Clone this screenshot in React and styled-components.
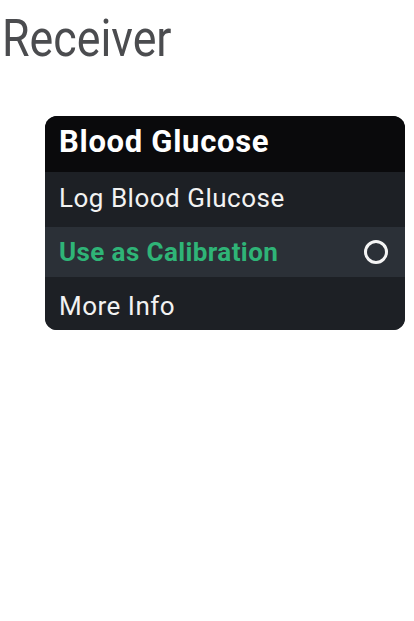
import React from "react";
import styled, { createGlobalStyle } from "styled-components";

const Global = createGlobalStyle`
  html, body { margin: 0; padding: 0; background: #ffffff; }
  body { font-family: Roboto, "Liberation Sans", sans-serif; }
`;

const Page = styled.div`
  width: 414px;
  height: 621px;
  display: flex;
  flex-direction: column;
  align-items: flex-start;
  padding: 13px 0 0 0;
  box-sizing: border-box;
`;

const Title = styled.h1`
  margin: 0 0 0 2px;
  font-family: Roboto, "Liberation Sans", sans-serif;
  font-weight: 400;
  font-size: 52px;
  line-height: 52px;
  letter-spacing: 0;
  color: #4b4c4f;
  transform: scaleX(0.86);
  transform-origin: left center;
`;

const Card = styled.div`
  margin: 51px 0 0 45px;
  width: 360px;
  border-radius: 12px;
  overflow: hidden;
  background: #1d2025;
  display: flex;
  flex-direction: column;
`;

const Header = styled.div`
  height: 56px;
  box-sizing: border-box;
  padding: 0 14px 5px 14px;
  background: #0a0a0c;
  display: flex;
  align-items: center;
  color: #ffffff;
  font-size: 31px;
  font-weight: 700;
  letter-spacing: 0.7px;
`;

const Row = styled.div`
  height: ${(p) => p.$h}px;
  box-sizing: border-box;
  padding: ${(p) => p.$pad || "0 17px 0 14px"};
  background: ${(p) => (p.$active ? "#2b3037" : "#1d2025")};
  display: flex;
  align-items: center;
  justify-content: space-between;
  color: ${(p) => (p.$active ? "#2fb477" : "#f2f2f2")};
  font-size: 26px;
  font-weight: ${(p) => (p.$active ? 700 : 400)};
  letter-spacing: ${(p) => (p.$active ? "0.4px" : "0.5px")};
`;

const Radio = styled.span`
  width: 18px;
  height: 18px;
  border: 3px solid #f4f4f4;
  border-radius: 50%;
`;

export default function App() {
  return (
    <>
      <Global />
      <Page>
        <Title>Receiver</Title>
        <Card>
          <Header>Blood Glucose</Header>
          <Row $h={55} $pad="0 17px 3px 14px">Log Blood Glucose</Row>
          <Row $h={50} $active>
            Use as Calibration
            <Radio />
          </Row>
          <Row $h={53} $pad="5px 17px 0 14px">More Info</Row>
        </Card>
      </Page>
    </>
  );
}
